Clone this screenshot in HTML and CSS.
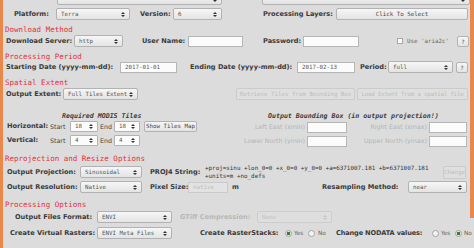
FILE: index.html
```html
<!DOCTYPE html>
<html lang="en">
<head>
  <meta charset="UTF-8">
  <title>MODIS Download and Processing</title>
  <link rel="stylesheet" href="styles.css">
</head>
<body>
  <div class="panel">
    <!-- cut off row at the top -->
    <div class="row r-top">
      <div class="combo c-top1"><span class="val"></span><span class="arrows"></span></div>
      <div class="combo c-top2"><span class="val"></span><span class="arrows"></span></div>
    </div>

    <div class="row r-platform">
      <span class="lbl l-platform">Platform:</span>
      <div class="combo c-platform"><span class="val">Terra</span><span class="arrows"></span></div>
      <span class="lbl l-version">Version:</span>
      <div class="combo c-version"><span class="val">6</span><span class="arrows"></span></div>
      <span class="lbl l-layers">Processing Layers:</span>
      <div class="btn b-layers">Click To Select</div>
    </div>

    <div class="head h-download">Download Method</div>
    <div class="row r-download">
      <span class="lbl l-server">Download Server:</span>
      <div class="combo c-server"><span class="val">http</span><span class="arrows"></span></div>
      <span class="lbl l-user">User Name:</span>
      <div class="entry e-user"></div>
      <span class="lbl l-pass">Password:</span>
      <div class="entry e-pass"></div>
      <span class="check"></span>
      <span class="opt l-aria">Use 'aria2c'</span>
      <div class="btn b-help b-help1">?</div>
    </div>

    <div class="head h-period">Processing Period</div>
    <div class="row r-period">
      <span class="lbl l-start">Starting Date (yyyy-mm-dd):</span>
      <div class="entry e-start">2017-01-01</div>
      <span class="lbl l-end">Ending Date (yyyy-mm-dd):</span>
      <div class="entry e-end">2017-02-13</div>
      <span class="lbl l-per">Period:</span>
      <div class="combo c-period"><span class="val">full</span><span class="arrows"></span></div>
      <div class="btn b-help b-help2">?</div>
    </div>

    <div class="head h-spatial">Spatial Extent</div>
    <div class="row r-extent">
      <span class="lbl l-extent">Output Extent:</span>
      <div class="combo c-extent"><span class="val">Full Tiles Extent</span><span class="arrows"></span></div>
      <div class="btn off b-retrieve">Retrieve Tiles from Bounding Box</div>
      <div class="btn off b-load">Load Extent from a spatial file</div>
    </div>

    <div class="row r-captions">
      <span class="caption cap-tiles">Required MODIS Tiles</span>
      <span class="caption cap-bbox">Output Bounding Box (in output projection!)</span>
    </div>

    <div class="row r-horiz">
      <span class="lbl l-horiz">Horizontal:</span>
      <span class="small l-hstart">Start</span>
      <div class="combo spin s-start"><span class="val">18</span><span class="arrows"></span></div>
      <span class="small l-hend">End</span>
      <div class="combo spin s-end"><span class="val">18</span><span class="arrows"></span></div>
      <div class="btn b-map">Show Tiles Map</div>
      <span class="small dim l-xmin">Left East (xmin)</span>
      <div class="entry e-box"></div>
      <span class="small dim l-xmax">Right East (xmax)</span>
      <div class="entry e-box2"></div>
    </div>

    <div class="row r-vert">
      <span class="lbl l-vert">Vertical:</span>
      <span class="small l-vstart">Start</span>
      <div class="combo spin s-start"><span class="val">4</span><span class="arrows"></span></div>
      <span class="small l-hend">End</span>
      <div class="combo spin s-end"><span class="val">4</span><span class="arrows"></span></div>
      <span class="small dim l-ymin">Lower North (ymin)</span>
      <div class="entry e-box"></div>
      <span class="small dim l-xmax">Upper North (ymax)</span>
      <div class="entry e-box2"></div>
    </div>

    <div class="head h-reproj">Reprojection and Resize Options</div>
    <div class="row r-proj">
      <span class="lbl l-proj">Output Projection:</span>
      <div class="combo c-proj"><span class="val">Sinusoidal</span><span class="arrows"></span></div>
      <span class="lbl l-proj4">PROJ4 String:</span>
      <div class="proj4">+proj=sinu +lon_0=0 +x_0=0 +y_0=0 +a=6371007.181 +b=6371007.181<br>+units=m +no_defs</div>
      <div class="btn off b-change">Change</div>
    </div>

    <div class="row r-res">
      <span class="lbl l-res">Output Resolution:</span>
      <div class="combo c-res"><span class="val">Native</span><span class="arrows"></span></div>
      <span class="lbl l-pix">Pixel Size:</span>
      <div class="entry off e-pix">native</div>
      <span class="lbl l-m">m</span>
      <span class="lbl l-resamp">Resampling Method:</span>
      <div class="combo c-resamp"><span class="val">near</span><span class="arrows"></span></div>
    </div>

    <div class="head h-options">Processing Options</div>
    <div class="row r-format">
      <span class="lbl l-format">Output Files Format:</span>
      <div class="combo c-format"><span class="val">ENVI</span><span class="arrows"></span></div>
      <span class="lbl dim l-gtiff">GTiff Compression:</span>
      <div class="combo off c-gtiff"><span class="val">None</span><span class="arrows"></span></div>
    </div>

    <div class="row r-virtual">
      <span class="lbl l-virtual">Create Virtual Rasters:</span>
      <div class="combo c-virtual"><span class="val">ENVI Meta Files</span><span class="arrows"></span></div>
      <span class="lbl l-stacks">Create RasterStacks:</span>
      <span class="radio on rad-a"></span><span class="opt o-yes">Yes</span>
      <span class="radio rad-b"></span><span class="opt o-no">No</span>
      <span class="lbl l-nodata">Change NODATA values:</span>
      <span class="radio rad-c"></span><span class="opt o-yes2">Yes</span>
      <span class="radio on rad-d"></span><span class="opt o-no2">No</span>
    </div>
  </div>
</body>
</html>
```

FILE: styles.css
```css
body {
  margin: 0;
  background: #dcdcdc;
  font-family: "DejaVu Sans", sans-serif;
  overflow: hidden;
}
/* window frame: orange strip on the left, a shorter one on the right */
.panel {
  width: 474px;
  height: 248px;
  box-shadow: inset 3px 0 #e8894b;
  background: linear-gradient(#e8894b, #e8894b) right top / 4px 218px no-repeat;
  display: flex;
  flex-direction: column;
}
.row {
  display: flex;
  align-items: center;
  height: 12px;
  flex-shrink: 0;
}
.head {
  flex-shrink: 0;
  height: 8px;
  line-height: 8px;
  padding-left: 5px;
  font-family: "DejaVu Sans Mono", monospace;
  font-size: 7.5px;
  color: #e2303a;
  white-space: nowrap;
}
.lbl {
  font-weight: bold;
  font-size: 6.6px;
  color: #3a3a3a;
  white-space: nowrap;
  flex-shrink: 0;
}
.lbl.dim {
  color: #b8b8b8;
}
.small, .opt {
  font-size: 6.3px;
  color: #444;
  white-space: nowrap;
  flex-shrink: 0;
}
.small.dim {
  color: #b4b4b4;
  text-align: right;
}
.caption {
  font-family: "DejaVu Sans Mono", monospace;
  font-style: italic;
  font-weight: bold;
  font-size: 6.6px;
  color: #3a3a3a;
  white-space: nowrap;
  flex-shrink: 0;
}

/* widgets */
.combo {
  box-sizing: border-box;
  height: 12px;
  flex-shrink: 0;
  display: flex;
  align-items: center;
  justify-content: space-between;
  padding: 0 4px 0 4px;
  border: 1px solid #b2b2b2;
  border-radius: 2px;
  background: linear-gradient(#f6f6f6, #e4e4e4);
}
.val {
  font-family: "DejaVu Sans Mono", monospace;
  font-size: 5.8px;
  color: #555;
  white-space: nowrap;
}
.arrows {
  display: flex;
  flex-direction: column;
  gap: 1px;
}
.arrows::before {
  content: "";
  border-left: 2px solid transparent;
  border-right: 2px solid transparent;
  border-bottom: 2.5px solid #333;
}
.arrows::after {
  content: "";
  border-left: 2px solid transparent;
  border-right: 2px solid transparent;
  border-top: 2.5px solid #333;
}
.combo.off .val { color: #c4c4c4; }
.combo.off .arrows::before { border-bottom-color: #c4c4c4; }
.combo.off .arrows::after { border-top-color: #c4c4c4; }
.combo.off {
  background: #dedede;
  border-color: #cdcdcd;
}
.spin {
  background: #fbfbfb;
  height: 11px;
  border-radius: 1px;
}
.entry {
  box-sizing: border-box;
  height: 11px;
  flex-shrink: 0;
  padding-left: 4px;
  border: 1px solid #b6b6b6;
  background: #fbfbfb;
  font-family: "DejaVu Sans Mono", monospace;
  font-size: 5.8px;
  line-height: 9px;
  color: #555;
  white-space: nowrap;
}
.entry.off {
  background: #e2e2e2;
  border-color: #cacaca;
  color: #c0c0c0;
}
.btn {
  box-sizing: border-box;
  height: 12px;
  flex-shrink: 0;
  border: 1px solid #b2b2b2;
  border-radius: 2px;
  background: linear-gradient(#f6f6f6, #e4e4e4);
  font-family: "DejaVu Sans Mono", monospace;
  font-size: 5.8px;
  line-height: 10px;
  color: #444;
  text-align: center;
  white-space: nowrap;
  overflow: hidden;
}
.btn.off {
  background: #dfdfdf;
  border-color: #cbcbcb;
  color: #bdbdbd;
}
.check {
  box-sizing: border-box;
  width: 6px;
  height: 6px;
  flex-shrink: 0;
  border: 1px solid #a8a8a8;
  background: #fafafa;
}
.radio {
  box-sizing: border-box;
  width: 7px;
  height: 7px;
  flex-shrink: 0;
  border: 1px solid #a4a4a4;
  border-radius: 50%;
  background: #f4f4f4;
}
.radio.on {
  background: radial-gradient(circle, #3f7d2e 0 1.5px, #dfe8dc 2px);
}
.proj4 {
  flex-shrink: 0;
  font-family: "DejaVu Sans Mono", monospace;
  font-size: 5.9px;
  line-height: 8.5px;
  color: #333;
  white-space: nowrap;
}

/* row placement */
.r-top { margin-top: -7px; }
.r-platform { margin-top: 3px; }
.h-download { margin-top: 6px; }
.r-download { margin-top: 1px; }
.h-period { margin-top: 6px; }
.h-spatial { margin-top: 6px; }
.r-extent { margin-top: 1px; }
.r-captions { margin-top: 12px; height: 8px; }
.r-vert { margin-top: 2px; }
.h-reproj { margin-top: 9px; }
.r-proj { margin-top: 1px; height: 16px; }
.r-res { margin-top: 1px; }
.h-options { margin-top: 8px; }
.r-format { margin-top: 2px; }
.r-virtual { margin-top: 4px; }

/* top row */
.c-top1 { margin-left: 57px; width: 165px; }
.c-top2 { margin-left: 40px; width: 208px; }

/* platform row */
.l-platform { margin-left: 14px; width: 36px; }
.c-platform { margin-left: 6px; width: 74px; }
.l-version { margin-left: 10px; width: 31px; }
.c-version { margin-left: 2px; width: 49px; }
.l-layers { margin-left: 41px; width: 70px; }
.b-layers { margin-left: 3px; width: 132px; }

/* download row */
.l-server { margin-left: 6px; width: 66px; }
.c-server { margin-left: 2px; width: 49px; }
.l-user { margin-left: 19px; width: 42px; }
.e-user { margin-left: 4px; width: 55px; }
.l-pass { margin-left: 20px; width: 37px; }
.e-pass { margin-left: 3px; width: 56px; }
.check { margin-left: 38px; }
.l-aria { margin-left: 4px; width: 41px; font-family: "DejaVu Sans Mono", monospace; font-size: 5.8px; }
.b-help { width: 12px; height: 11px; }
.b-help1 { margin-left: 9px; }

/* period row */
.l-start { margin-left: 6px; width: 109px; }
.e-start { margin-left: 5px; width: 57px; }
.l-end { margin-left: 13px; width: 102px; }
.e-end { margin-left: 5px; width: 58px; }
.l-per { margin-left: 5px; width: 25px; }
.c-period { margin-left: 3px; width: 65px; }
.b-help2 { margin-left: 3px; }

/* extent row */
.l-extent { margin-left: 6px; width: 54px; }
.c-extent { margin-left: 3px; width: 75px; }
.b-retrieve { margin-left: 98px; width: 119px; }
.b-load { margin-left: 2px; width: 111px; letter-spacing: -0.2px; }

/* captions */
.cap-tiles { margin-left: 62px; width: 80px; }
.cap-bbox { margin-left: 126px; width: 172px; }

/* tiles and bounding box rows */
.l-horiz { margin-left: 7px; width: 41px; }
.l-hstart { margin-left: 2px; width: 17px; }
.l-vert { margin-left: 7px; width: 33px; }
.l-vstart { margin-left: 10px; width: 17px; }
.s-start { margin-left: 3px; width: 28px; }
.l-hend { margin-left: 2px; width: 12px; }
.s-end { margin-left: 2px; width: 26px; }
.b-map { margin-left: 4px; width: 53px; height: 11px; line-height: 9px; }
.l-xmin { margin-left: 43px; width: 65px; }
.l-ymin { margin-left: 100px; width: 65px; }
.e-box { margin-left: 2px; width: 40px; margin-top: 3px; }
.l-xmax { margin-left: 5px; width: 75px; }
.e-box2 { margin-left: 2px; width: 38px; margin-top: 3px; }

/* projection rows */
.l-proj { margin-left: 7px; width: 68px; }
.c-proj { margin-left: 5px; width: 62px; }
.l-proj4 { margin-left: 8px; width: 47px; }
.proj4 { margin-left: 8px; width: 235px; }
.b-change { margin-left: 3px; width: 23px; height: 13px; line-height: 11px; }
.l-res { margin-left: 7px; width: 65px; }
.c-res { margin-left: 8px; width: 62px; }
.l-pix { margin-left: 8px; width: 35px; }
.e-pix { margin-left: 3px; width: 40px; }
.l-m { margin-left: 4px; width: 4px; }
.l-resamp { margin-left: 86px; width: 76px; }
.c-resamp { margin-left: 10px; width: 59px; }

/* processing options */
.l-format { margin-left: 15px; width: 75px; }
.c-format { margin-left: 7px; width: 75px; }
.l-gtiff { margin-left: 8px; width: 67px; }
.c-gtiff { margin-left: 10px; width: 75px; }
.l-virtual { margin-left: 10px; width: 81px; }
.c-virtual { margin-left: 6px; width: 75px; }
.l-stacks { margin-left: 28px; width: 78px; }
.rad-a { margin-left: 7px; }
.o-yes { margin-left: 2px; width: 12px; }
.rad-b { margin-left: 2px; }
.o-no { margin-left: 3px; width: 10px; }
.l-nodata { margin-left: 8px; width: 88px; letter-spacing: -0.15px; }
.rad-c { margin-left: 8px; }
.o-yes2 { margin-left: 2px; width: 12px; }
.rad-d { margin-left: 2px; }
.o-no2 { margin-left: 2px; width: 10px; }
.opt { font-size: 5.8px; color: #666; }
```
